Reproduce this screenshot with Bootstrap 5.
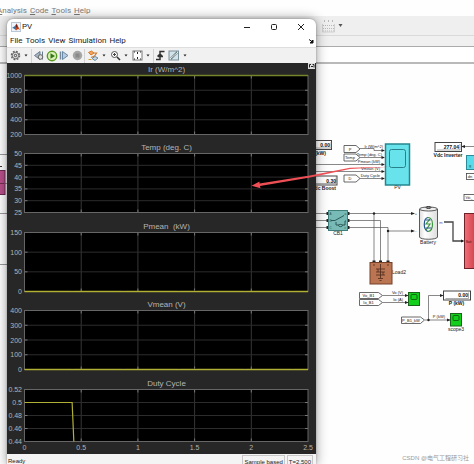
<!DOCTYPE html>
<html lang="en">
<head>
<meta charset="utf-8">
<meta name="viewport" content="width=device-width, initial-scale=1">
<title>PV</title>
<link href="https://cdn.jsdelivr.net/npm/bootstrap@5.3.0/dist/css/bootstrap.min.css" rel="stylesheet">
<style>
body{font-family:Roboto,"Open Sans",sans-serif;font-size:8px;line-height:12px;color:#222;background:#fefefe}
a,button{color:inherit;text-decoration:none}
.desktop{min-height:100vh}
.editor-menu{gap:3px;height:16px;padding-top:5px;margin-left:-3px;color:#7c7c7c}
.editor-tools{height:20px;background:#efefef;border-bottom:1px solid #dadada;padding-left:calc(200%/3 + 6px)}
.editor-tools button{border:0;background:none;padding:0}
.editor-crumbs{height:11px;background:#f0f0f0;border-bottom:1px solid #ababab}
.editor-path{height:17px;background:#fff;border-bottom:2px solid #b9b9b9}
.model-view,.callout{display:block;width:100%;height:auto}
.model-view text{font-family:"Liberation Sans",Arial,sans-serif}
.scope-window{left:7px;right:calc(100%/3);top:19px;background:#fff;border-radius:6px 6px 0 0;box-shadow:0 0 12px rgba(0,0,0,.42),0 0 2px rgba(0,0,0,.3)}
.title-bar{height:15px;padding-left:4px}
.title-bar svg{margin-right:1px}
.window-keys{gap:16px;padding-right:9px}
.window-keys button,.tool-row button{border:0;background:none;padding:0;display:flex;align-items:center;justify-content:center}
.scope-menu{height:13px;gap:3px;padding-left:3px;padding-right:2px;color:#222}
.tool-row{height:16px;background:#f1f1f1;border-top:1px solid #dedede}
.tool-row .tool{width:12px;height:14px}
.tool-row .more{width:10px;height:14px}
.tool-group{display:flex;align-items:center}
.tool-group.ruled{border-right:1px solid #d2d2d2}
.tool-group.roomy{padding-left:2px}
.tool-group.run-keys .tool{width:13px}
.plots{background:#272727}
.plots svg{display:block;width:100%;height:auto}
.plots text{font-family:"Liberation Sans",Arial,sans-serif;fill:#b4b4b4}
.status{height:11px;background:#f4f4f4;font:6px/14px "Liberation Sans",Arial,sans-serif;padding:0 3px 0 1px;gap:2px;color:#222}
.status .cell{border:1px solid #c8c8c8;padding:0 1px;height:14px;line-height:12px;margin-top:1px}
.watermark{right:5px;bottom:0;font:6px/12px "Liberation Sans","Noto Sans CJK SC",sans-serif;color:#999}
.callout{left:0;top:0;pointer-events:none}
</style>
<script src="https://cdn.jsdelivr.net/npm/bootstrap@5.3.0/dist/js/bootstrap.bundle.min.js"></script>
</head>
<body class="overflow-hidden">
<div class="desktop position-relative overflow-hidden">
  <nav class="editor-menu d-flex" aria-label="Editor menu">
    <a href="#"><u>A</u>nalysis</a><a href="#"><u>C</u>ode</a><a href="#"><u>T</u>ools</a><a href="#"><u>H</u>elp</a>
  </nav>
  <div class="editor-tools d-flex align-items-center">
    <button type="button" aria-label="Build"><svg width="22" height="14" viewBox="0 0 22 14"><g fill="none" stroke="#b8b8b8"><path d="M2.500 1v3M6.500 1v3M10.500 1v3" stroke-dasharray="2 1"/><path d="M1 6.500h11M1 9.500h11M1 12h11" stroke-dasharray="1 1"/><path d="M.5 5v8h12V5" stroke="#d0d0d0"/></g><path d="M16.500 5h4l-2 3z" fill="#555"/></svg></button>
  </div>
  <div class="editor-crumbs"></div>
  <div class="editor-path"></div>

  <svg class="model-view" viewBox="0 64 474 400" role="img" aria-label="Block diagram">
    <defs>
      <linearGradient id="red" x2="1"><stop stop-color="#f0717a"/><stop offset="1" stop-color="#c9343d"/></linearGradient>
      <linearGradient id="cell" x2="1"><stop stop-color="#ddd"/><stop offset=".3" stop-color="#fff"/><stop offset="1" stop-color="#ddd"/></linearGradient>
    </defs>
    <g stroke="#999" fill="none"><path d="M0 154.500h8M0 183.500h8M0 213.500h8M0 264.500h8"/></g>
    <path d="M0 166.500h2" stroke="#333"/>
    <rect x="-5" y="170.500" width="10" height="24" fill="#b8508a" stroke="#6a2a50"/><path d="M0 183.500h4" stroke="#703050"/>
    <g fill="none" stroke="#555" stroke-width=".7">
      <path d="M360 148.500h14V150.500h10M360 157.500h24M310 164.500h74M310 171.500h74M360 178.500h24"/>
      <path d="M310 213.500h18M310 220.500h18M310 227.500h18M348 213.500h65M374 213.500V262M348 220.500h32.500V262M348 227.500h40V262M388 231h25"/>
      <path d="M383 295.500h25M383 302.500h25M425 320h25M428.500 320V295.500h15M463 146.500h11"/>
    </g>
    <path d="M444 222h9v19h10" fill="none" stroke="#444" stroke-width="1.300"/>
    <g fill="#222">
      <path d="M381.500 149l3.500 1.500-3.500 1.500zM381.500 156l3.500 1.500-3.500 1.500zM381.500 163l3.500 1.500-3.500 1.500zM381.500 170l3.500 1.500-3.500 1.500zM381.500 177l3.500 1.500-3.500 1.500zM411 212l4 1.500-4 1.500zM411 229.500l4 1.500-4 1.500zM405 294l3.500 1.500-3.500 1.500zM405 301l3.500 1.500-3.500 1.500zM447 318.500l3.500 1.500-3.500 1.500zM440 294l3.500 1.500-3.500 1.500zM461 239.500l3.500 1.500-3.500 1.500zM465 145l-4 1.500 4 1.500z"/>
      <path d="M326.500 212h3v3h-3zM326.500 219h3v3h-3zM326.500 226h3v3h-3zM346.500 212h3v3h-3zM346.500 219h3v3h-3zM346.500 226h3v3h-3zM372.500 260.500h3v3h-3zM379 260.500h3v3h-3zM386.500 260.500h3v3h-3z"/>
      <circle cx="374" cy="213.500" r="1.200"/><circle cx="388" cy="231" r="1.200"/><circle cx="428.500" cy="320" r="1.200"/>
    </g>
    <!-- displays -->
    <g fill="#fff" stroke="#444" stroke-width="1">
      <rect x="300" y="140.500" width="31.500" height="9"/><rect x="305" y="176" width="32" height="9"/><rect x="435" y="142.500" width="26.500" height="9"/><rect x="443.500" y="291" width="27" height="9"/>
    </g>
    <g fill="none" stroke="#777" stroke-width=".6"><path d="M331 142v6h-20M336 177.500v6h-20M437 150h23v-6M445.500 298.500h23v-6"/></g>
    <g fill="#111" font-size="5" font-weight="bold" text-anchor="end">
      <text x="330" y="147">0.00</text><text x="336" y="182.500">0.30</text><text x="459" y="148.500">277.04</text><text x="468" y="297">0.00</text>
    </g>
    <g fill="#222" font-size="5" font-weight="bold">
      <text x="326" y="155" text-anchor="end">P (kW)</text><text x="336" y="190" text-anchor="end">Vdc Boost</text><text x="448" y="157" text-anchor="middle">Vdc Inverter</text><text x="456.500" y="305" text-anchor="middle">P (kW)</text>
    </g>
    <!-- tags -->
    <g fill="#fff" stroke="#444" stroke-width=".8">
      <path d="M344 145.500h12l4 3.500-4 3.500h-12zM344 154h12l4 3.500-4 3.500h-12zM344 175h12l4 3.500-4 3.500h-12zM359.500 292.500h19l4 3-4 3h-19zM359.500 299.500h19l4 3-4 3h-19zM401.500 317h19l4 3-4 3.500h-19z"/>
      <rect x="464" y="194.500" width="14" height="6"/><rect x="466.500" y="173.500" width="12" height="6"/>
    </g>
    <g fill="#222" font-size="4" text-anchor="middle">
      <text x="350" y="150.500">P</text><text x="350" y="159">Temp</text><text x="350" y="180">D</text>
      <text x="368.500" y="297">Vo_B1</text><text x="368.500" y="304">Io_B1</text><text x="411" y="321.500">P_B1_kW</text>
      <text x="469" y="199" font-size="3">Vdc_</text><text x="470" y="178">dn</text>
      <text x="441" y="223.500" fill="#4450c0">m</text><text x="416" y="214.500">+</text><text x="416" y="232">-</text>
    </g>
    <g fill="#222" font-size="5" text-anchor="middle">
      <text x="397.500" y="189">PV</text><text x="338" y="235">CB1</text><text x="428" y="244">Battery</text><text x="399" y="274">Load2</text><text x="456" y="331">scope3</text>
    </g>
    <g fill="#222" font-size="4" text-anchor="end">
      <text x="383" y="147.500">Ir (W/m^2)</text><text x="382" y="156">Temp (deg. C)</text><text x="380" y="163">Pmean (kW)</text><text x="380" y="170">Vmean (V)</text><text x="380" y="177">Duty Cycle</text>
      <text x="403" y="294">Vo (V)</text><text x="403" y="301">Io (A)</text><text x="445" y="318">P (kW)</text>
    </g>
    <!-- PV scope block -->
    <rect x="385.500" y="144" width="24" height="41" fill="#68e3ec" stroke="#24868e" stroke-width="1.500"/>
    <rect x="389.500" y="149.500" width="16" height="18" rx="2" fill="none" stroke="#28818a"/>
    <rect x="466.500" y="155.500" width="12" height="14" fill="#58dbea" stroke="#2b8b96"/><text x="469" y="167" font-size="4" fill="#255">g</text>
    <!-- breaker -->
    <rect x="328.500" y="210.500" width="19" height="20" fill="#78bbb6" stroke="#3f7f7b"/>
    <path d="M331 220.500h4l9-5M336 222v3h3m3 0h3v-4h1M338.500 225.500c0-1.500 4-1.500 4 0s-4 1.500-4 0" fill="none" stroke="#254f4c" stroke-width=".9"/>
    <g fill="#254f4c" font-size="3"><text x="329.500" y="214.500">A</text><text x="329.500" y="221.500">B</text><text x="329.500" y="229">C</text><text x="344.500" y="214.500">a</text><text x="344.500" y="229">c</text></g>
    <!-- battery -->
    <path d="M419.500 209v28c0 3 18 3 18 0V209" fill="url(#cell)" stroke="#333" stroke-width=".8"/>
    <ellipse cx="428.500" cy="209" rx="9" ry="2" fill="#eee" stroke="#333" stroke-width=".8"/><ellipse cx="428.500" cy="207.500" rx="2.500" ry="1" fill="#888" stroke="#222" stroke-width=".8"/>
    <g fill="none" stroke-width="1.200"><path d="M428 217.500c-5 1-5 12 0 14" stroke="#20508a"/><path d="M428 217.500c6 0 6 13 0 14" stroke="#3e963f"/><path d="M430 219l-4 5h4l-4 6" stroke="#3f963f"/><path d="M425.500 220h5M425.500 228h6" stroke="#265d82"/></g>
    <rect x="464.500" y="213.500" width="14" height="55" fill="url(#red)" stroke="#702229"/><text x="466" y="242.500" font-size="3" fill="#411">Batt</text>
    <!-- load -->
    <rect x="370" y="262.500" width="22" height="21.500" fill="#bb7553" stroke="#744028"/>
    <path d="M374 264v2M380.500 264v4M388 264v2M376 269h9M376 272h9M376 275h9M380.500 268v10M378 278.500h5M379.500 280.500h2M378 269v3M383 272v3" fill="none" stroke="#4b281a" stroke-width=".8"/>
    <!-- green scopes -->
    <g fill="#13cf1b" stroke="#17631a"><rect x="408.500" y="292.500" width="11" height="13"/><rect x="450.500" y="313.500" width="11" height="12.500"/></g>
    <g fill="none" stroke="#0b5d10" stroke-width=".9"><rect x="411" y="294.500" width="6" height="5" rx="1"/><rect x="453" y="315.500" width="6" height="5" rx="1"/></g>
  </svg>

  <section class="scope-window position-absolute" aria-label="PV scope">
    <header class="title-bar d-flex align-items-center">
      <svg width="10" height="10" viewBox="0 0 10 10"><rect x=".5" y=".5" width="9" height="9" fill="#eef4fa" stroke="#b9c8d8"/><path d="M1 6l3-2 1.500-2.500L6 4 4.500 8 3 6.500z" fill="#336a9e"/><path d="M5.500 1.500L9 8 7 7 5 8.500 4 6.500z" fill="#c54b22"/><path d="M5 4l1-2 .5 5z" fill="#511"/></svg>
      <span>PV</span>
      <div class="window-keys d-flex ms-auto">
        <button type="button" aria-label="Minimize"><svg width="10" height="10"><path d="M2 5.500h6" stroke="#222"/></svg></button>
        <button type="button" aria-label="Maximize"><svg width="10" height="10"><rect x="2.500" y="2.500" width="5" height="5" rx="1" fill="none" stroke="#222"/></svg></button>
        <button type="button" aria-label="Close"><svg width="10" height="10"><path d="M2 2l6 6M8 2l-6 6" stroke="#222"/></svg></button>
      </div>
    </header>
    <nav class="scope-menu d-flex align-items-center" aria-label="Scope menu">
      <a href="#">File</a><a href="#">Tools</a><a href="#">View</a><a href="#">Simulation</a><a href="#">Help</a>
      <svg class="ms-auto" width="6" height="6"><path d="M1 1.500l3 2M5 2v3H2z" stroke="#111" fill="#111"/></svg>
    </nav>
    <div class="tool-row d-flex align-items-center" role="toolbar" aria-label="Scope tools">
      <div class="tool-group roomy ruled">
        <button class="tool" type="button" aria-label="Settings"><svg width="11" height="11" viewBox="0 0 11 11"><circle cx="5.500" cy="5.500" r="4" fill="none" stroke="#666" stroke-width="1.600" stroke-dasharray="1.800 1.340"/><circle cx="5.500" cy="5.500" r="3.200" fill="#e8e8e8" stroke="#666"/><circle cx="5.500" cy="5.500" r="1.200" fill="none" stroke="#444"/></svg></button>
        <button class="more" type="button" aria-label="Settings options"><svg width="4" height="3"><path d="M.5.500h3L2 2.500z" fill="#222"/></svg></button>
      </div>
      <div class="tool-group run-keys ruled">
        <button class="tool" type="button" aria-label="Step back"><svg width="11" height="11" viewBox="0 0 11 11"><path d="M7 1.500v8L1.500 5.500z" fill="#a9b6c4" stroke="#6a7d90"/><path d="M9.500 1.500v8" stroke="#6a7d90"/><circle cx="7.500" cy="7" r="2.300" fill="#ddd" stroke="#666"/></svg></button>
        <button class="tool" type="button" aria-label="Run"><svg width="12" height="12" viewBox="0 0 12 12"><circle cx="6" cy="6" r="4.700" fill="#d9efb9" stroke="#589a20" stroke-width="1.400"/><path d="M4.500 3.200v5.600L9 6z" fill="#347719"/></svg></button>
        <button class="tool" type="button" aria-label="Step forward"><svg width="11" height="11" viewBox="0 0 11 11"><path d="M1.500 1.500v8" stroke="#75889c" stroke-width="1.500"/><path d="M3.500 1.500v8l5.500-4z" fill="#b7cbe0" stroke="#6888a8"/></svg></button>
        <button class="tool" type="button" aria-label="Stop"><svg width="11" height="11" viewBox="0 0 11 11"><circle cx="5.500" cy="5.500" r="4.700" fill="#a5a5a5"/><rect x="3.500" y="3.500" width="4" height="4" fill="#8a8a8a"/></svg></button>
      </div>
      <div class="tool-group roomy">
        <button class="tool" type="button" aria-label="Highlight block"><svg width="12" height="12" viewBox="0 0 12 12"><path d="M1.500 2.500l3-1.500 2.500 2-3 2z" fill="#f3a45f" stroke="#d47a2b"/><path d="M7 3h2.500L7.500 6 4 7.500" fill="none" stroke="#d47a2b" stroke-width="1.200"/><path d="M5 8.500l3-2 3 1.500-3 2.500z" fill="#c5dbe8" stroke="#6b8ba0"/><path d="M1.500 9.500h3" stroke="#d9a030"/></svg></button>
        <button class="more" type="button" aria-label="Highlight options"><svg width="4" height="3"><path d="M.5.500h3L2 2.500z" fill="#222"/></svg></button>
      </div>
      <div class="tool-group">
        <button class="tool" type="button" aria-label="Zoom"><svg width="11" height="11" viewBox="0 0 11 11"><circle cx="4.500" cy="4.500" r="3" fill="#fff" stroke="#555"/><path d="M3 4.500h3M4.500 3v3" stroke="#444"/><path d="M7 7l3 3" stroke="#333" stroke-width="1.600"/></svg></button>
        <button class="more" type="button" aria-label="Zoom options"><svg width="4" height="3"><path d="M.5.500h3L2 2.500z" fill="#222"/></svg></button>
      </div>
      <div class="tool-group ruled">
        <button class="tool" type="button" aria-label="Scale axes"><svg width="11" height="11" viewBox="0 0 11 11"><rect x="1" y="1" width="9" height="9" fill="#fff" stroke="#777"/><path d="M5.500 2v2M5.500 7v2M2 2h1M8 2h1M2 9h1M8 9h1" stroke="#222"/></svg></button>
        <button class="more" type="button" aria-label="Scale options"><svg width="4" height="3"><path d="M.5.500h3L2 2.500z" fill="#222"/></svg></button>
      </div>
      <div class="tool-group">
        <button class="tool" type="button" aria-label="Trigger"><svg width="11" height="11" viewBox="0 0 11 11"><path d="M1 9.500h4v-8h4.500M2.500 6.500L5 4l2.500 2.500M3 6.500h5" fill="none" stroke="#333" stroke-width="1.500"/></svg></button>
      </div>
      <div class="tool-group roomy">
        <button class="tool" type="button" aria-label="Measurements"><svg width="12" height="11" viewBox="0 0 12 11"><rect x="1" y="1" width="9.500" height="9" fill="#d3e3ea" stroke="#78909b"/><path d="M2.500 9L9.500 2" stroke="#4c6570" stroke-width="2"/><path d="M2 9l8-7" stroke="#f5f5e5"/></svg></button>
        <button class="more" type="button" aria-label="Measurement options"><svg width="4" height="3"><path d="M.5.500h3L2 2.500z" fill="#222"/></svg></button>
      </div>
    </div>
    <div class="plots" id="plots"></div>
    <footer class="status d-flex"><span class="me-auto">Ready</span><span class="cell">Sample based</span><span class="cell">T=2.500</span></footer>
  </section>

  <svg class="callout position-absolute" viewBox="0 0 474 464" aria-hidden="true"><path d="M251.500 185.800L259.500 181.500 259.500 183.500 310 175.500 350 167.800 391 166.800 350 169 310 177.500 260 186 260.500 188.300z" fill="#ee4f55"/></svg>
  <div class="watermark position-absolute">CSDN @电气工程研习社</div>
</div>
<script>
const charts = [
  {title:"Ir (W/m^2)", h:78, ticks:["1000","800","600","400","200"], line:[[0,0],[2.5,0]]},
  {title:"Temp (deg. C)", h:79, ticks:["50","45","40","35","30","25"], line:[]},
  {title:"Pmean  (kW)", h:78, ticks:["150","100","50","0"], line:[[0,1],[2.5,1]]},
  {title:"Vmean (V)", h:79, ticks:["400","300","200","100","0"], line:[[0,1],[2.5,1]]},
  {title:"Duty Cycle", h:77, ticks:["0.52","0.5","0.48","0.46","0.44"], line:[[0,.25],[.42,.25],[.435,1]], times:["0","0.5","1","1.5","2","2.5"]}
];
const left = 17.5, right = 301, top0 = 12.5;
document.getElementById("plots").innerHTML = charts.map((c, n) => {
  const tall = c.times ? 52 : 59, x = t => left + (right - left) * t / 2.5, y = f => top0 + tall * f;
  let s = `<svg viewBox="0 0 309 ${c.h}" role="img" aria-label="${c.title}">`;
  s += `<rect x="${left}" y="${top0}" width="${right-left}" height="${tall}" fill="#000"/>`;
  for (let k = 1; k < 5; k++) s += `<path d="M${x(k/2)} ${top0}v${tall}" stroke="#363636"/><path d="M${x(k/2)} ${top0}v3m0 ${tall-6}v3" stroke="#777"/>`;
  c.ticks.forEach((t, i) => {
    const v = y(i / (c.ticks.length - 1));
    s += `<path d="M${left} ${v}H${right}" stroke="#2c2c2c"/><path d="M${left} ${v}h3M${right-3} ${v}h3" stroke="#777"/><text x="15" y="${v+2.5}" font-size="7" text-anchor="end">${t}</text>`;
  });
  s += `<rect x="${left}" y="${top0}" width="${right-left}" height="${tall}" fill="none" stroke="#666"/>`;
  s += `<text x="159.5" y="9" font-size="8" text-anchor="middle" xml:space="preserve">${c.title}</text>`;
  if (c.line.length) s += `<polyline points="${c.line.map(p => x(p[0]) + "," + y(p[1])).join(" ")}" fill="none" stroke="${n ? "#b0b034" : "#74842a"}" stroke-width="${n < 4 ? 1.6 : 1.2}"/>`;
  if (n === 2 || n === 3) [.41,.86,1.35,1.5,1.93,2.35].forEach(t => s += `<path d="M${x(t)} ${y(1)-1}h3" stroke="#222" stroke-width=".8"/>`);
  (c.times || []).forEach((t, i) => s += `<text x="${x(i/2)}" y="73" font-size="7" text-anchor="middle">${t}</text>`);
  if (!n) s += `<rect x="301" y="0" width="7" height="6" fill="#ddd"/><path d="M302.500 4.500v-3h1.500m3 3v-3h-1.500M304 3.500h2" stroke="#222" fill="none"/>`;
  return s + "</svg>";
}).join("");
</script>
</body>
</html>
